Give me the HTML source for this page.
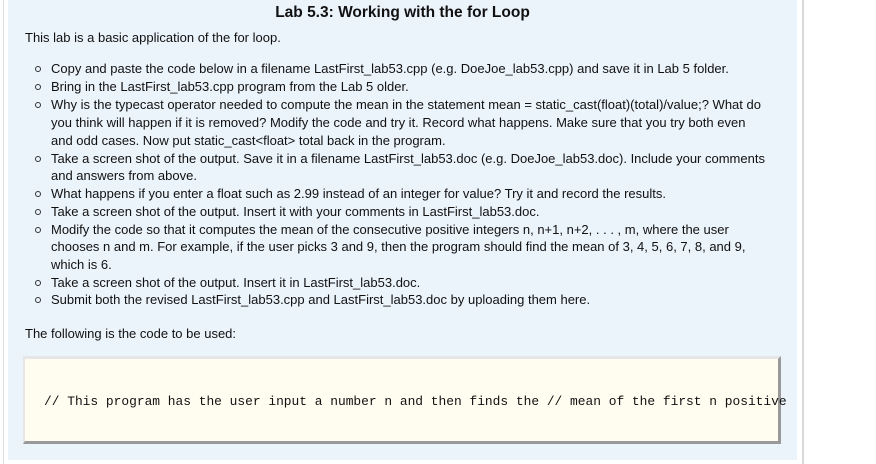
<!DOCTYPE html>
<html><head><style>
body{margin:0;width:876px;height:464px;background:#fff;position:relative;overflow:hidden;font-family:"Liberation Sans",Arial,sans-serif;font-size:13px;color:#111;}
.l1{position:absolute;left:3px;top:0;width:1px;height:464px;background:#ddd}
.l2{position:absolute;left:802px;top:0;width:2px;height:464px;background:#d8d8d8}
.panel{position:absolute;left:8px;top:0;width:789px;height:460px;background:#ebf3fb}
h1{position:absolute;left:8px;width:789px;top:4px;margin:0;text-align:center;font-size:15.5px;font-weight:bold}
.t{position:absolute;left:25px;white-space:nowrap}
.b{position:absolute;left:51px;white-space:nowrap}
.d{position:absolute;left:35px;width:4px;height:4px;border:1px solid #333;border-radius:50%}
.code{position:absolute;left:15px;top:356px;width:758px;height:88px;background:#fffdf0;border-top:3px solid #e6e6e6;border-left:2px solid #e6e6e6;border-right:3px solid #999;border-bottom:3px solid #999;box-sizing:border-box}
.code span{position:absolute;left:19px;top:35px;font-family:"Liberation Mono",monospace;font-size:12.9px;white-space:nowrap;color:#111}
</style></head><body>
<div class="l1"></div><div class="l2"></div>
<div class="panel">
<div class="code"><span>// This program has the user input a number n and then finds the // mean of the first n positive</span></div>
</div>
<h1>Lab 5.3: Working with the for Loop</h1>
<div class="t" style="top:30px">This lab is a basic application of the for loop.</div>
<div class="d" style="top:66px"></div><div class="b" style="top:61px">Copy and paste the code below in a filename LastFirst_lab53.cpp (e.g. DoeJoe_lab53.cpp) and save it in Lab 5 folder.</div>
<div class="d" style="top:84px"></div><div class="b" style="top:79px">Bring in the LastFirst_lab53.cpp program from the Lab 5 older.</div>
<div class="d" style="top:102px"></div><div class="b" style="top:97px">Why is the typecast operator needed to compute the mean in the statement mean = static_cast(float)(total)/value;? What do</div>
<div class="b" style="top:115px">you think will happen if it is removed? Modify the code and try it. Record what happens. Make sure that you try both even</div>
<div class="b" style="top:133px">and odd cases. Now put static_cast&lt;float&gt; total back in the program.</div>
<div class="d" style="top:156px"></div><div class="b" style="top:151px">Take a screen shot of the output. Save it in a filename LastFirst_lab53.doc (e.g. DoeJoe_lab53.doc). Include your comments</div>
<div class="b" style="top:168px">and answers from above.</div>
<div class="d" style="top:191px"></div><div class="b" style="top:186px">What happens if you enter a float such as 2.99 instead of an integer for value? Try it and record the results.</div>
<div class="d" style="top:209px"></div><div class="b" style="top:204px">Take a screen shot of the output. Insert it with your comments in LastFirst_lab53.doc.</div>
<div class="d" style="top:227px"></div><div class="b" style="top:222px">Modify the code so that it computes the mean of the consecutive positive integers n, n+1, n+2, . . . , m, where the user</div>
<div class="b" style="top:239px">chooses n and m. For example, if the user picks 3 and 9, then the program should find the mean of 3, 4, 5, 6, 7, 8, and 9,</div>
<div class="b" style="top:257px">which is 6.</div>
<div class="d" style="top:280px"></div><div class="b" style="top:275px">Take a screen shot of the output. Insert it in LastFirst_lab53.doc.</div>
<div class="d" style="top:297px"></div><div class="b" style="top:292px">Submit both the revised LastFirst_lab53.cpp and LastFirst_lab53.doc by uploading them here.</div>
<div class="t" style="top:326px">The following is the code to be used:</div>
</body></html>
